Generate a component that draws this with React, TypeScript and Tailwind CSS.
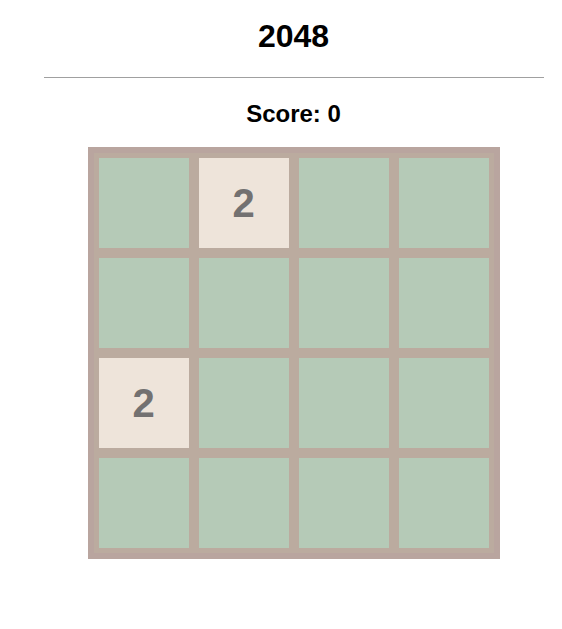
import React, { useState } from "react";

const SIZE = 4;

const initialBoard = (): number[][] => {
    const b = Array.from({ length: SIZE }, () => Array(SIZE).fill(0));
    b[0][1] = 2;
    b[2][0] = 2;
    return b;
};

const Tile = ({ value }: { value: number }) => (
    <div
        className={`flex h-[90px] w-[90px] items-center justify-center text-[40px] font-bold text-[#737171] ${value ? "bg-[#eee4da]" : "bg-[#b5cab7]"}`}
    >
        {value ? value : ""}
    </div>
);

export default function App() {
    const [board] = useState(initialBoard);
    const [score] = useState(0);

    return (
        <div className="min-h-screen bg-white pl-[25px] font-['Liberation_Sans',Arial,sans-serif] text-black">
            <div className="mx-auto flex max-w-[500px] flex-col items-center pt-[18px]">
                <h1 className="text-[32px] leading-[1.15] font-bold">2048</h1>
                <hr className="mt-[22px] h-0 w-full border-t border-[#a0a0a0]" />
                <h2 className="mt-[22px] text-[24px] leading-[1.15] font-bold">
                    Score: {score}
                </h2>
                <div className="mt-[20px] grid grid-cols-4 gap-[10px] border-[6px] border-[#b9a59f] bg-[#bbab9f] p-[5px]">
                    {board.map((row, r) =>
                        row.map((v, c) => <Tile key={`${r}-${c}`} value={v} />)
                    )}
                </div>
            </div>
        </div>
    );
}
